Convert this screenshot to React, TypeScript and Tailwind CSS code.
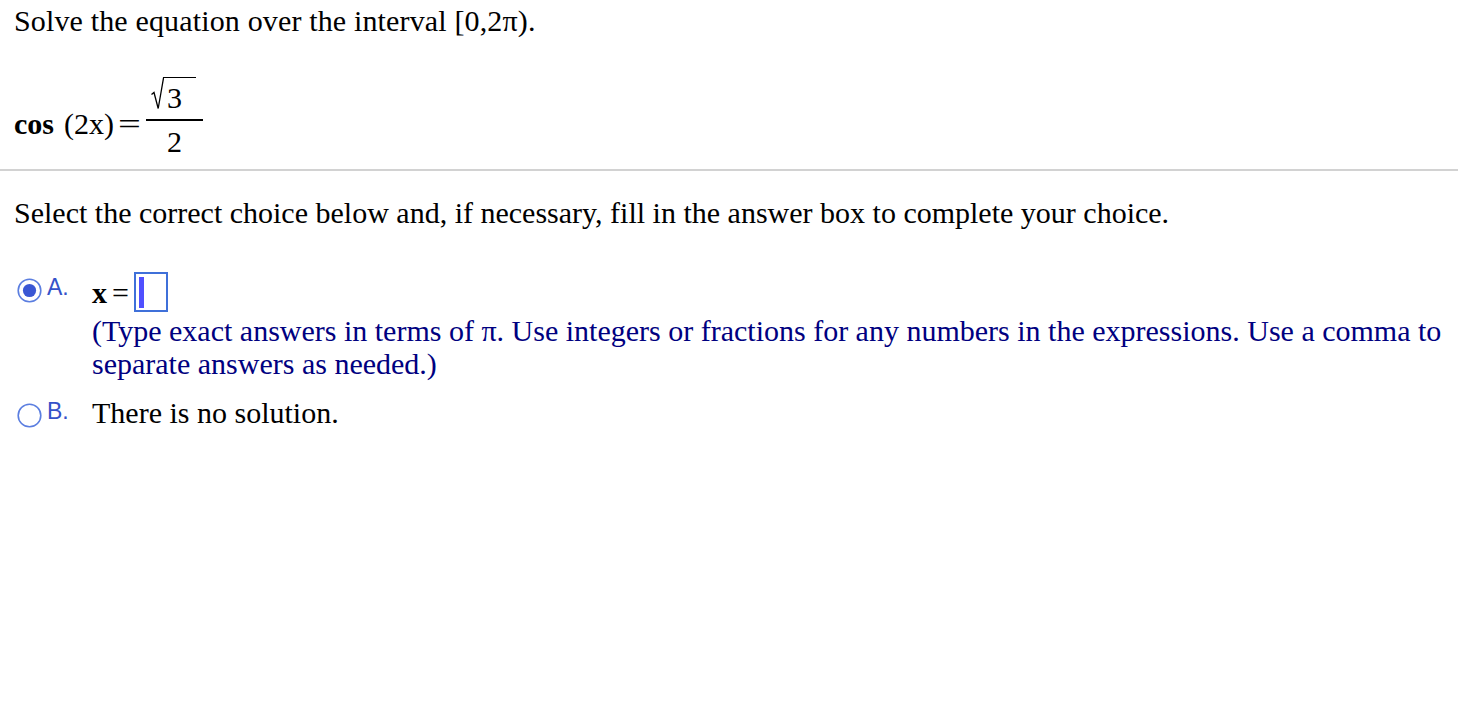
import React from "react";

const serif = { fontFamily: '"Liberation Serif", "Times New Roman", serif' };
const sans = { fontFamily: '"Liberation Sans", Arial, Helvetica, sans-serif' };

function Radio({ checked }: { checked?: boolean }) {
  return (
    <svg width="25" height="25" viewBox="0 0 25 25" className="shrink-0">
      <circle cx="12.5" cy="12.5" r="11.3" fill="white" stroke="#5b7ee0" strokeWidth="1.6" />
      {checked && <circle cx="12.5" cy="12.5" r="6.6" fill="#3a57d4" />}
    </svg>
  );
}

export default function App() {
  return (
    <div className="w-[1468px] h-[718px] bg-white text-black overflow-hidden text-[30px]" style={serif}>
      <div className="pl-[14px] pt-[4px] leading-[34px] tracking-[0.15px]">
        Solve the equation over the interval [0,2π).
      </div>

      <div className="pl-[14px] mt-[39px] flex items-start">
        <div className="flex items-start mt-[30px] leading-[34px]">
          <span className="font-bold">cos</span>
          <span className="ml-[10px]">(2x)</span>
          <span className="ml-[4px] inline-block scale-x-[1.35] origin-left w-[28px]">=</span>
        </div>
        <div className="flex flex-col w-[57px]">
          <div className="h-[42px] flex items-start pl-[5px]">
            <svg width="13" height="34" viewBox="0 0 13 34" className="shrink-0">
              <path d="M0.5 17.5 L3 15.5 L7.2 31.5 L12.6 0.5 L13 0.5" fill="none" stroke="black" strokeWidth="1.3" strokeLinejoin="miter" />
            </svg>
            <span className="border-t-[1.3px] border-black pt-[3px] pl-[3px] pr-[14px] leading-[34px]">3</span>
          </div>
          <div className="h-[1.5px] w-[57px] bg-black"></div>
          <div className="pt-[4px] leading-[34px] text-center">2</div>
        </div>
      </div>

      <div className="mt-[10px] h-[2px] w-[1458px] bg-[#d2d2d2]"></div>

      <div className="pl-[14px] mt-[25px] leading-[34px]">
        Select the correct choice below and, if necessary, fill in the answer box to complete your choice.
      </div>

      <div className="mt-[42px] pl-[17px]">
        <div className="flex items-start">
          <div className="flex items-start w-[75px] h-[40px]">
            <div className="mt-[6px]">
              <Radio checked />
            </div>
            <span className="ml-[5px] mt-[4px] text-[23px] leading-[23px] text-[#3552c9]" style={sans}>A.</span>
          </div>
          <div>
            <div className="flex items-start h-[40px]">
              <span className="font-bold leading-[34px] mt-[4px]">x</span>
              <span className="ml-[5px] leading-[34px] mt-[4px]">=</span>
              <span className="ml-[5px] w-[34px] h-[40px] border-2 border-[#3f70d9] flex items-start pl-[3px] pt-[3px]">
                <span className="w-[5px] h-[31px] bg-[#5050ff]"></span>
              </span>
            </div>
            <div className="leading-[33px] text-[#000080] mt-[2px]">
              (Type exact answers in terms of π. Use integers or fractions for any numbers in the expressions. Use a comma to
              <br />
              separate answers as needed.)
            </div>
          </div>
        </div>

        <div className="flex items-start mt-[16px]">
          <div className="flex items-start w-[75px]">
            <div className="mt-[7px]">
              <Radio />
            </div>
            <span className="ml-[5px] mt-[4px] text-[23px] leading-[23px] text-[#3552c9]" style={sans}>B.</span>
          </div>
          <div className="leading-[34px]">There is no solution.</div>
        </div>
      </div>
    </div>
  );
}
